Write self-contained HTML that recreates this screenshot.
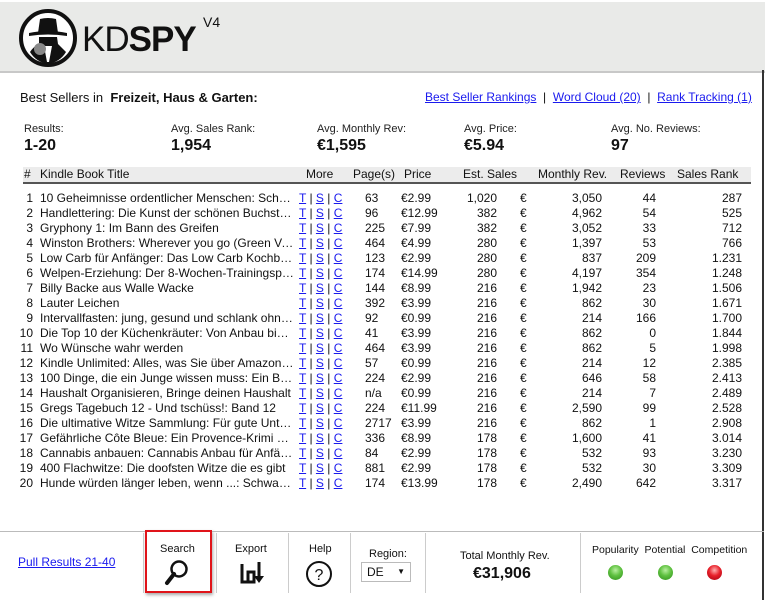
<!DOCTYPE html><html><head><meta charset="utf-8"><style>
body{margin:0;width:768px;height:600px;background:#fff;font-family:"Liberation Sans",Arial,sans-serif;color:#111;position:relative;overflow:hidden}
.a{position:absolute;white-space:nowrap}
a,.l{color:#1a1aee;text-decoration:underline}
.row{position:absolute;left:0;width:768px;height:15px;font-size:12px;line-height:15px}
.row span{position:absolute;white-space:nowrap}
.n{right:735px;text-align:right}
.t{left:40px;width:254px;overflow:hidden;text-overflow:ellipsis}
.m{left:299px}
.p{left:365px}
.pr{left:401px}
.e{right:271px}
.eu{left:520px}
.mr{right:166px}
.rv{right:112px}
.sr{right:26px}
.lab{font-size:11px;color:#222}
.big{font-size:16px;font-weight:bold}
.dot{position:absolute;width:15px;height:15px;border-radius:50%}
.g{background:radial-gradient(circle at 50% 35%,#b9f0a0 0,#5fc140 45%,#2f8f1c 100%)}
.r{background:radial-gradient(circle at 50% 35%,#ffb0b0 0,#e8202a 45%,#a00010 100%)}
.vd{position:absolute;top:533px;width:1px;height:60px;background:#ccc}
</style></head><body>
<div class="a" style="left:0;top:2px;width:765px;height:69px;background:#e9eae8;border-bottom:2px solid #c8c8c8"></div>
<div class="a" style="right:4px;top:70px;width:2px;height:530px;background:#333"></div>
<svg class="a" style="left:18px;top:8px" width="60" height="60" viewBox="0 0 60 60">
<circle cx="30" cy="30" r="27" fill="#fff" stroke="#111" stroke-width="4"/>
<path d="M11 25 Q30 21 49 25 L49 28 Q30 25 11 28Z" fill="#111"/>
<path d="M20 25 L22 11 Q30 9 38 11 L40 25Z" fill="#111"/>
<path d="M21 29 L39 29 L40 36 Q44 40 48 44 Q42 54 30 56 Q18 54 12 44 Q16 38 21 36Z" fill="#111"/>
<path d="M26 38 L34 38 L31 54 L29 54Z" fill="#fff"/>
<circle cx="22" cy="41" r="6" fill="#888"/>
</svg>
<div class="a" style="left:82px;top:19px;font-size:35px;line-height:42px;letter-spacing:-1px;color:#111">KD<b>SPY</b></div>
<div class="a" style="left:203px;top:14px;font-size:14px;color:#111">V4</div>

<div class="a" style="left:20px;top:90px;font-size:13px">Best Sellers in &nbsp;<b>Freizeit, Haus &amp; Garten:</b></div>
<div class="a" style="left:425px;top:90px;font-size:12px"><span class="l">Best Seller Rankings</span> &nbsp;| &nbsp;<span class="l">Word Cloud (20)</span> &nbsp;| &nbsp;<span class="l">Rank Tracking (1)</span></div>

<div class="a lab" style="left:24px;top:123px">Results:</div><div class="a big" style="left:24px;top:137px">1-20</div>
<div class="a lab" style="left:171px;top:123px">Avg. Sales Rank:</div><div class="a big" style="left:171px;top:137px">1,954</div>
<div class="a lab" style="left:317px;top:123px">Avg. Monthly Rev:</div><div class="a big" style="left:317px;top:137px">€1,595</div>
<div class="a lab" style="left:464px;top:123px">Avg. Price:</div><div class="a big" style="left:464px;top:137px">€5.94</div>
<div class="a lab" style="left:611px;top:123px">Avg. No. Reviews:</div><div class="a big" style="left:611px;top:137px">97</div>

<div class="a" style="left:23px;top:167px;width:728px;height:15px;background:#ececec;border-bottom:2px solid #555"></div>
<div class="row" style="top:167px"><span style="left:24px">#</span><span style="left:40px">Kindle Book Title</span><span style="left:306px">More</span><span style="left:353px">Page(s)</span><span class="pr" style="left:404px">Price</span><span style="left:463px">Est. Sales</span><span style="left:538px">Monthly Rev.</span><span style="left:620px">Reviews</span><span style="left:677px">Sales Rank</span></div>

<div class="row" style="top:191px"><span class="n">1</span><span class="t">10 Geheimnisse ordentlicher Menschen: Schritt für Schritt</span><span class="m"><u class="l">T</u> | <u class="l">S</u> | <u class="l">C</u></span><span class="p">63</span><span class="pr">€2.99</span><span class="e">1,020</span><span class="eu">€</span><span class="mr">3,050</span><span class="rv">44</span><span class="sr">287</span></div>
<div class="row" style="top:206px"><span class="n">2</span><span class="t">Handlettering: Die Kunst der schönen Buchstaben</span><span class="m"><u class="l">T</u> | <u class="l">S</u> | <u class="l">C</u></span><span class="p">96</span><span class="pr">€12.99</span><span class="e">382</span><span class="eu">€</span><span class="mr">4,962</span><span class="rv">54</span><span class="sr">525</span></div>
<div class="row" style="top:221px"><span class="n">3</span><span class="t">Gryphony 1: Im Bann des Greifen</span><span class="m"><u class="l">T</u> | <u class="l">S</u> | <u class="l">C</u></span><span class="p">225</span><span class="pr">€7.99</span><span class="e">382</span><span class="eu">€</span><span class="mr">3,052</span><span class="rv">33</span><span class="sr">712</span></div>
<div class="row" style="top:236px"><span class="n">4</span><span class="t">Winston Brothers: Wherever you go (Green Valley)</span><span class="m"><u class="l">T</u> | <u class="l">S</u> | <u class="l">C</u></span><span class="p">464</span><span class="pr">€4.99</span><span class="e">280</span><span class="eu">€</span><span class="mr">1,397</span><span class="rv">53</span><span class="sr">766</span></div>
<div class="row" style="top:251px"><span class="n">5</span><span class="t">Low Carb für Anfänger: Das Low Carb Kochbuch</span><span class="m"><u class="l">T</u> | <u class="l">S</u> | <u class="l">C</u></span><span class="p">123</span><span class="pr">€2.99</span><span class="e">280</span><span class="eu">€</span><span class="mr">837</span><span class="rv">209</span><span class="sr">1.231</span></div>
<div class="row" style="top:266px"><span class="n">6</span><span class="t">Welpen-Erziehung: Der 8-Wochen-Trainingsplan</span><span class="m"><u class="l">T</u> | <u class="l">S</u> | <u class="l">C</u></span><span class="p">174</span><span class="pr">€14.99</span><span class="e">280</span><span class="eu">€</span><span class="mr">4,197</span><span class="rv">354</span><span class="sr">1.248</span></div>
<div class="row" style="top:281px"><span class="n">7</span><span class="t">Billy Backe aus Walle Wacke</span><span class="m"><u class="l">T</u> | <u class="l">S</u> | <u class="l">C</u></span><span class="p">144</span><span class="pr">€8.99</span><span class="e">216</span><span class="eu">€</span><span class="mr">1,942</span><span class="rv">23</span><span class="sr">1.506</span></div>
<div class="row" style="top:296px"><span class="n">8</span><span class="t">Lauter Leichen</span><span class="m"><u class="l">T</u> | <u class="l">S</u> | <u class="l">C</u></span><span class="p">392</span><span class="pr">€3.99</span><span class="e">216</span><span class="eu">€</span><span class="mr">862</span><span class="rv">30</span><span class="sr">1.671</span></div>
<div class="row" style="top:311px"><span class="n">9</span><span class="t">Intervallfasten: jung, gesund und schlank ohne Diät</span><span class="m"><u class="l">T</u> | <u class="l">S</u> | <u class="l">C</u></span><span class="p">92</span><span class="pr">€0.99</span><span class="e">216</span><span class="eu">€</span><span class="mr">214</span><span class="rv">166</span><span class="sr">1.700</span></div>
<div class="row" style="top:326px"><span class="n">10</span><span class="t">Die Top 10 der Küchenkräuter: Von Anbau bis Ernte</span><span class="m"><u class="l">T</u> | <u class="l">S</u> | <u class="l">C</u></span><span class="p">41</span><span class="pr">€3.99</span><span class="e">216</span><span class="eu">€</span><span class="mr">862</span><span class="rv">0</span><span class="sr">1.844</span></div>
<div class="row" style="top:341px"><span class="n">11</span><span class="t">Wo Wünsche wahr werden</span><span class="m"><u class="l">T</u> | <u class="l">S</u> | <u class="l">C</u></span><span class="p">464</span><span class="pr">€3.99</span><span class="e">216</span><span class="eu">€</span><span class="mr">862</span><span class="rv">5</span><span class="sr">1.998</span></div>
<div class="row" style="top:356px"><span class="n">12</span><span class="t">Kindle Unlimited: Alles, was Sie über Amazon wissen</span><span class="m"><u class="l">T</u> | <u class="l">S</u> | <u class="l">C</u></span><span class="p">57</span><span class="pr">€0.99</span><span class="e">216</span><span class="eu">€</span><span class="mr">214</span><span class="rv">12</span><span class="sr">2.385</span></div>
<div class="row" style="top:371px"><span class="n">13</span><span class="t">100 Dinge, die ein Junge wissen muss: Ein Buch</span><span class="m"><u class="l">T</u> | <u class="l">S</u> | <u class="l">C</u></span><span class="p">224</span><span class="pr">€2.99</span><span class="e">216</span><span class="eu">€</span><span class="mr">646</span><span class="rv">58</span><span class="sr">2.413</span></div>
<div class="row" style="top:386px"><span class="n">14</span><span class="t">Haushalt Organisieren, Bringe deinen Haushalt</span><span class="m"><u class="l">T</u> | <u class="l">S</u> | <u class="l">C</u></span><span class="p">n/a</span><span class="pr">€0.99</span><span class="e">216</span><span class="eu">€</span><span class="mr">214</span><span class="rv">7</span><span class="sr">2.489</span></div>
<div class="row" style="top:401px"><span class="n">15</span><span class="t">Gregs Tagebuch 12 - Und tschüss!: Band 12</span><span class="m"><u class="l">T</u> | <u class="l">S</u> | <u class="l">C</u></span><span class="p">224</span><span class="pr">€11.99</span><span class="e">216</span><span class="eu">€</span><span class="mr">2,590</span><span class="rv">99</span><span class="sr">2.528</span></div>
<div class="row" style="top:416px"><span class="n">16</span><span class="t">Die ultimative Witze Sammlung: Für gute Unterhaltung</span><span class="m"><u class="l">T</u> | <u class="l">S</u> | <u class="l">C</u></span><span class="p">2717</span><span class="pr">€3.99</span><span class="e">216</span><span class="eu">€</span><span class="mr">862</span><span class="rv">1</span><span class="sr">2.908</span></div>
<div class="row" style="top:431px"><span class="n">17</span><span class="t">Gefährliche Côte Bleue: Ein Provence-Krimi Band</span><span class="m"><u class="l">T</u> | <u class="l">S</u> | <u class="l">C</u></span><span class="p">336</span><span class="pr">€8.99</span><span class="e">178</span><span class="eu">€</span><span class="mr">1,600</span><span class="rv">41</span><span class="sr">3.014</span></div>
<div class="row" style="top:446px"><span class="n">18</span><span class="t">Cannabis anbauen: Cannabis Anbau für Anfänger</span><span class="m"><u class="l">T</u> | <u class="l">S</u> | <u class="l">C</u></span><span class="p">84</span><span class="pr">€2.99</span><span class="e">178</span><span class="eu">€</span><span class="mr">532</span><span class="rv">93</span><span class="sr">3.230</span></div>
<div class="row" style="top:461px"><span class="n">19</span><span class="t">400 Flachwitze: Die doofsten Witze die es gibt</span><span class="m"><u class="l">T</u> | <u class="l">S</u> | <u class="l">C</u></span><span class="p">881</span><span class="pr">€2.99</span><span class="e">178</span><span class="eu">€</span><span class="mr">532</span><span class="rv">30</span><span class="sr">3.309</span></div>
<div class="row" style="top:476px"><span class="n">20</span><span class="t">Hunde würden länger leben, wenn ...: Schwachstellen</span><span class="m"><u class="l">T</u> | <u class="l">S</u> | <u class="l">C</u></span><span class="p">174</span><span class="pr">€13.99</span><span class="e">178</span><span class="eu">€</span><span class="mr">2,490</span><span class="rv">642</span><span class="sr">3.317</span></div>

<div class="a" style="left:0;top:531px;width:764px;height:1px;background:#bbb"></div>
<div class="a l" style="left:18px;top:555px;font-size:12px">Pull Results 21-40</div>
<div class="vd" style="left:143px"></div><div class="vd" style="left:216px"></div><div class="vd" style="left:288px"></div><div class="vd" style="left:350px"></div><div class="vd" style="left:425px"></div><div class="vd" style="left:580px"></div>
<div class="a" style="left:145px;top:530px;width:63px;height:59px;border:2px solid #e0141a;box-shadow:1px 2px 3px #aaa"></div>
<div class="a" style="left:160px;top:543px;font-size:11px">Search</div>
<svg class="a" style="left:164px;top:559px" width="26" height="28" viewBox="0 0 26 28"><circle cx="15" cy="10" r="7.5" fill="none" stroke="#111" stroke-width="2.5"/><path d="M10 15 L3 24" stroke="#111" stroke-width="4" stroke-linecap="round"/></svg>
<div class="a" style="left:235px;top:543px;font-size:11px">Export</div>
<svg class="a" style="left:240px;top:560px" width="26" height="26" viewBox="0 0 26 26"><path d="M2 4 V22 H14 V12 H8 V22" fill="none" stroke="#111" stroke-width="3"/><path d="M19 2 V18" stroke="#111" stroke-width="3"/><path d="M14 16 L19 23 L24 16Z" fill="#111"/></svg>
<div class="a" style="left:309px;top:543px;font-size:11px">Help</div>
<svg class="a" style="left:305px;top:560px" width="28" height="28" viewBox="0 0 28 28"><circle cx="14" cy="14" r="12" fill="none" stroke="#111" stroke-width="2"/><text x="14" y="20" text-anchor="middle" font-size="16" font-family="Liberation Sans" fill="#111">?</text></svg>
<div class="a" style="left:369px;top:548px;font-size:11px">Region:</div>
<div class="a" style="left:361px;top:562px;width:48px;height:18px;border:1px solid #bbb;font-size:12px;line-height:18px"><span style="margin-left:5px">DE</span><span style="position:absolute;right:5px;top:0;font-size:8px">▼</span></div>
<div class="a" style="left:460px;top:550px;font-size:11px">Total Monthly Rev.</div>
<div class="a" style="left:473px;top:565px;font-size:16px;font-weight:bold">€31,906</div>
<div class="a" style="left:592px;top:544px;font-size:10.5px">Popularity&nbsp; Potential&nbsp; Competition</div>
<div class="dot g" style="left:608px;top:565px"></div><div class="dot g" style="left:658px;top:565px"></div><div class="dot r" style="left:707px;top:565px"></div>
</body></html>
